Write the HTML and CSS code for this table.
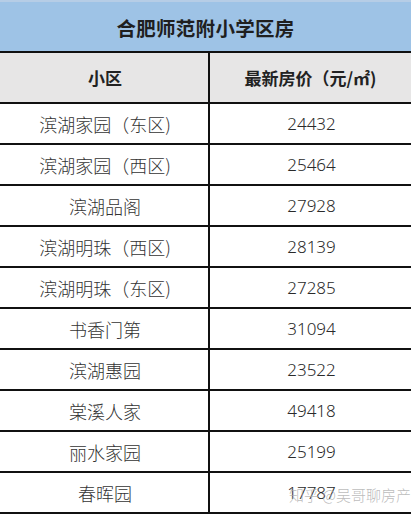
FILE: index.html
```html
<!DOCTYPE html>
<html lang="zh">
<head>
<meta charset="utf-8">
<link rel="stylesheet" href="styles.css">
</head>
<body>
<div class="sheet">
  <div class="title">合肥师范附小学区房</div>
  <div class="row head">
    <div class="cell name">小区</div>
    <div class="cell">最新房价（元/㎡)</div>
  </div>
  <div class="row"><div class="cell name">滨湖家园（东区)</div><div class="cell num">24432</div></div>
  <div class="row"><div class="cell name">滨湖家园（西区)</div><div class="cell num">25464</div></div>
  <div class="row"><div class="cell name">滨湖品阁</div><div class="cell num">27928</div></div>
  <div class="row"><div class="cell name">滨湖明珠（西区)</div><div class="cell num">28139</div></div>
  <div class="row"><div class="cell name">滨湖明珠（东区)</div><div class="cell num">27285</div></div>
  <div class="row"><div class="cell name">书香门第</div><div class="cell num">31094</div></div>
  <div class="row"><div class="cell name">滨湖惠园</div><div class="cell num">23522</div></div>
  <div class="row"><div class="cell name">棠溪人家</div><div class="cell num">49418</div></div>
  <div class="row"><div class="cell name">丽水家园</div><div class="cell num">25199</div></div>
  <div class="row"><div class="cell name">春晖园</div><div class="cell num">17787</div></div>
  <div class="watermark">知乎 @吴哥聊房产</div>
</div>
</body>
</html>
```
FILE: styles.css
```css
html, body {
  margin: 0;
  padding: 0;
  background: #ffffff;
}
body {
  width: 411px;
  height: 514px;
  overflow: hidden;
  font-family: "Noto Sans CJK SC", "Noto Sans", sans-serif;
  color: #333333;
}
.sheet {
  position: relative;
  width: 411px;
}
.title {
  box-sizing: border-box;
  height: 53px;
  background: #9ec3e6;
  border-top: 2px solid #b6cde6;
  border-bottom: 2px solid #111111;
  display: flex;
  align-items: center;
  justify-content: center;
  font-size: 19.5px;
  font-weight: 700;
  color: #1f1f1f;
  letter-spacing: 0.3px;
  padding-top: 1px;
}
.row {
  box-sizing: border-box;
  display: grid;
  grid-template-columns: 210px 1fr;
  height: 41px;
  border-bottom: 2px solid #111111;
  font-weight: 300;
}
.row.head {
  height: 51px;
  background: #e7e6e6;
  font-weight: 700;
  color: #222222;
}
.row.head .cell {
  font-size: 17px;
}
.cell {
  display: flex;
  align-items: center;
  justify-content: center;
  font-size: 18px;
  line-height: 1;
}
.cell.name {
  border-right: 2px solid #111111;
  padding-left: 2px;
}
.cell.num {
  font-family: "Noto Sans", "Open Sans", sans-serif;
  font-size: 17px;
  color: #2a2a2a;
  padding-left: 2px;
}
.watermark {
  position: absolute;
  left: 289px;
  top: 484px;
  font-size: 15px;
  font-weight: 300;
  color: rgba(170, 170, 170, 0.8);
  white-space: nowrap;
}
```
